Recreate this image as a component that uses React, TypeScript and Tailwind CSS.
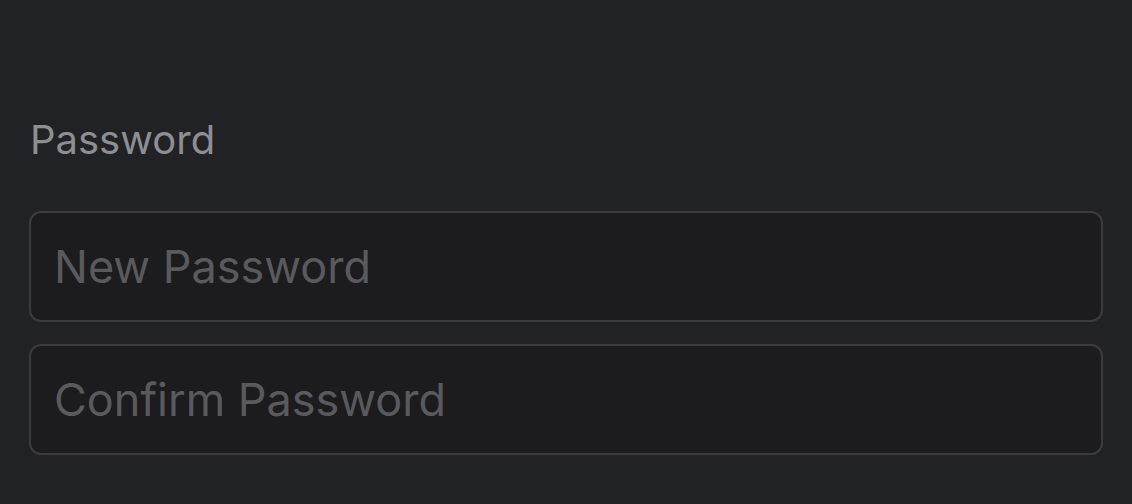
import React from 'react';

const fieldClass =
  "block w-full h-[111px] rounded-[12px] border-2 border-[#3c3c3f] bg-[#1c1c1e] px-[23px] text-[45px] text-[#e5e5ea] placeholder:text-[#5a5a5e] outline-none";

export default function App() {
  return (
    <div className="min-h-[504px] w-full bg-[#212226] px-[29px] pt-[112px] font-['Inter',sans-serif]">
      <label className="block text-[40px] leading-[56px] text-[#8e8e93] pl-[1px]">Password</label>
      <div className="mt-[43px] flex flex-col gap-[22px] w-[1074px]">
        <input type="password" placeholder="New Password" className={fieldClass} />
        <input type="password" placeholder="Confirm Password" className={fieldClass} />
      </div>
    </div>
  );
}
